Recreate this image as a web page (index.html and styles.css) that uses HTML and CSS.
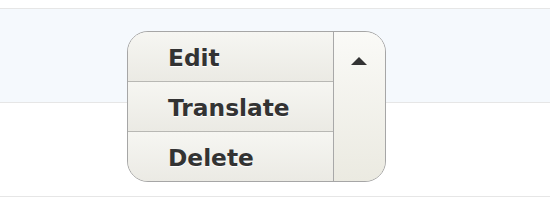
FILE: index.html
```html
<!DOCTYPE html>
<html lang="en">
<head>
  <meta charset="UTF-8">
  <title>Operations</title>
  <link rel="stylesheet" href="styles.css">
</head>
<body>
  <div class="listing">
    <div class="row selected">
      <div class="ops">
        <div class="dropbutton-wrapper open">
          <div class="dropbutton-widget">
            <ul class="dropbutton">
              <li><a href="#">Edit</a></li>
              <li><a href="#">Translate</a></li>
              <li><a href="#">Delete</a></li>
            </ul>
            <button class="dropbutton-toggle" title="List additional actions"><span class="arrow"></span></button>
          </div>
        </div>
      </div>
    </div>
    <div class="row"></div>
  </div>
</body>
</html>
```

FILE: styles.css
```css
body { margin: 0; background: #fff; font-family: "DejaVu Sans", "Lucida Grande", sans-serif; color: #333; }
.listing { padding-top: 8px; }
.row { height: 93px; border-bottom: 1px solid #e6e6e6; }
.row.selected { background: #f5f9fd; border-top: 1px solid #e6e6e6; }
.ops { padding: 22px 0 0 127px; }
.dropbutton-wrapper { position: relative; height: 50px; }
.dropbutton-widget { position: absolute; top: 0; left: 0; z-index: 1; display: flex; width: 257px; border: 1px solid #a6a6a6; border-radius: 21px; overflow: hidden; background: linear-gradient(#f7f7f4, #e9e8e0); }
.dropbutton { list-style: none; margin: 0; padding: 0; width: 205px; border-right: 1px solid #a8a8a8; }
.dropbutton li { border-bottom: 1px solid #b8b8b4; background: linear-gradient(#f6f6f2, #ebeae4); }
.dropbutton li:last-child { border-bottom: none; }
.dropbutton a { display: block; height: 49px; line-height: 51px; padding-left: 40px; font-size: 23.3px; font-weight: bold; color: #333; text-decoration: none; text-shadow: 0 1px 0 #fff; }
.dropbutton-toggle { flex: 1; position: relative; border: none; padding: 0; margin: 0; background: linear-gradient(#fafaf7, #ebeae1); cursor: pointer; }
.arrow { position: absolute; top: 25px; left: 17px; width: 0; height: 0; border-left: 8px solid transparent; border-right: 8px solid transparent; border-bottom: 8px solid #333; }
```
